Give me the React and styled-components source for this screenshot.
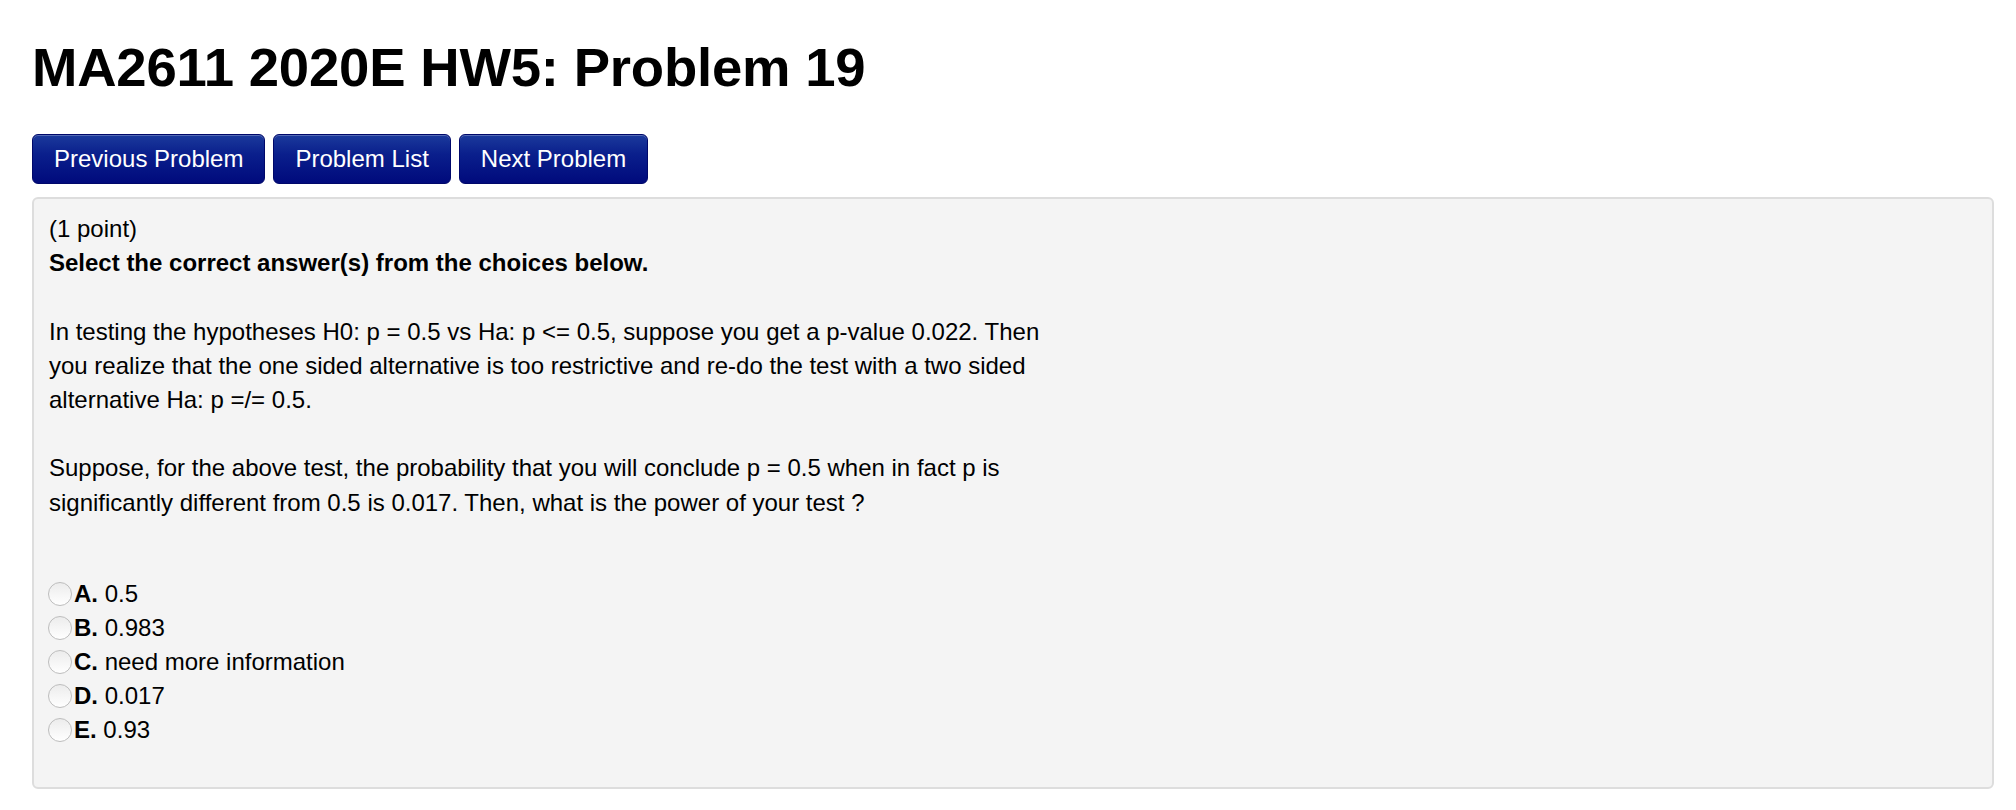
import React from "react";
import styled, { createGlobalStyle } from "styled-components";

const GlobalStyle = createGlobalStyle`
  html, body {
    margin: 0;
    padding: 0;
    background: #ffffff;
  }
  body {
    font-family: "Liberation Sans", Arial, Helvetica, sans-serif;
    font-size: 24px;
    line-height: 34.3px;
    color: #000;
  }
`;

const Page = styled.div`
  padding: 0 22px 0 32px;
`;

const Title = styled.h1`
  margin: 0;
  padding-top: 37px;
  font-size: 54.5px;
  line-height: 62px;
  font-weight: bold;
  letter-spacing: -0.2px;
`;

const Nav = styled.div`
  display: flex;
  gap: 8px;
  margin-top: 35px;
  margin-bottom: 13px;
`;

const NavButton = styled.button`
  height: 50px;
  padding: 0 21px;
  font-family: "Liberation Sans", Arial, Helvetica, sans-serif;
  font-size: 24px;
  color: #ffffff;
  background: linear-gradient(to bottom, #1b3a9c 0%, #0a1f8c 40%, #000a7c 100%);
  border: 1px solid #00086a;
  border-radius: 6px;
  box-shadow: inset 0 1px 0 rgba(255, 255, 255, 0.25);
  cursor: pointer;
`;

const ProblemBox = styled.div`
  background: #f4f4f4;
  border: 2px solid #dddddd;
  border-radius: 6px;
  padding: 13px 15px 40px 15px;
`;

const Para = styled.p`
  margin: 0 0 ${(p) => p.$gap ?? 34}px 0;
`;

const Bold = styled.b`
  font-weight: bold;
`;

const Choices = styled.div`
  display: flex;
  flex-direction: column;
  margin-top: 57px;
`;

const Choice = styled.label`
  display: flex;
  align-items: center;
  height: 34px;
`;

const Radio = styled.span`
  flex: none;
  width: 24px;
  height: 24px;
  margin-left: -1px;
  margin-right: 2px;
  border-radius: 50%;
  border: 1px solid #bdbdbd;
  background: linear-gradient(to bottom, #ececec, #ffffff);
  box-sizing: border-box;
`;

const choices = [
  ["A.", "0.5"],
  ["B.", "0.983"],
  ["C.", "need more information"],
  ["D.", "0.017"],
  ["E.", "0.93"],
];

export default function App() {
  return (
    <>
      <GlobalStyle />
      <Page>
        <Title>MA2611 2020E HW5: Problem 19</Title>
        <Nav>
          <NavButton>Previous Problem</NavButton>
          <NavButton>Problem List</NavButton>
          <NavButton>Next Problem</NavButton>
        </Nav>
        <ProblemBox>
          <Para $gap={0}>(1 point)</Para>
          <Para>
            <Bold>Select the correct answer(s) from the choices below.</Bold>
          </Para>
          <Para>
            In testing the hypotheses H0: p = 0.5 vs Ha: p &lt;= 0.5, suppose you get a p-value 0.022. Then
            <br />
            you realize that the one sided alternative is too restrictive and re-do the test with a two sided
            <br />
            alternative Ha: p =/= 0.5.
          </Para>
          <Para $gap={0}>
            Suppose, for the above test, the probability that you will conclude p = 0.5 when in fact p is
            <br />
            significantly different from 0.5 is 0.017. Then, what is the power of your test ?
          </Para>
          <Choices>
            {choices.map(([letter, text]) => (
              <Choice key={letter}>
                <Radio />
                <span>
                  <Bold>{letter}</Bold> {text}
                </span>
              </Choice>
            ))}
          </Choices>
        </ProblemBox>
      </Page>
    </>
  );
}
